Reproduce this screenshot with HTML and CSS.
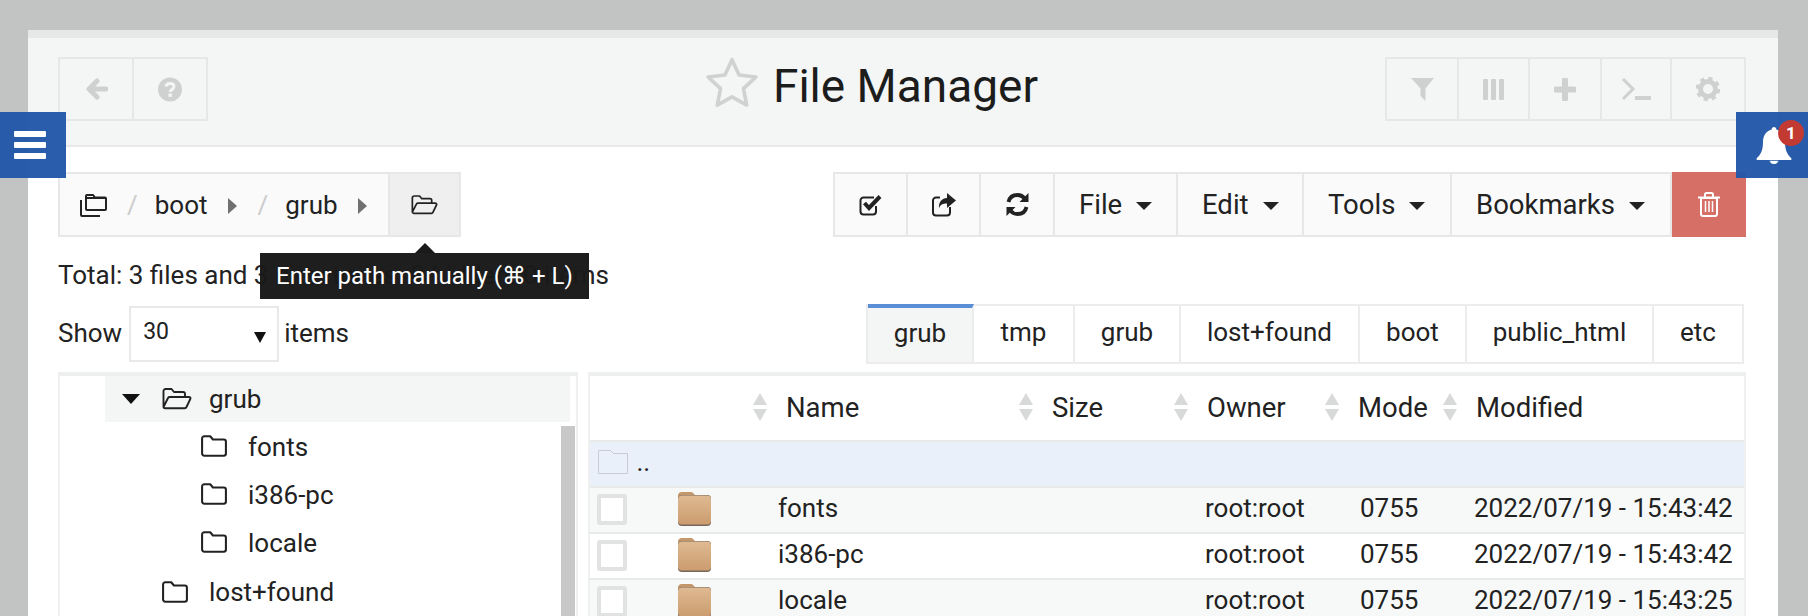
FILE: index.html
```html
<!DOCTYPE html>
<html lang="en">
<head>
    <meta charset="UTF-8">
    <meta name="viewport" content="width=device-width, initial-scale=1.0">
    <title>File Manager</title>
    <link rel="stylesheet" href="styles.css">
</head>
<body>
    <svg class="defs" width="0" height="0">
        <linearGradient id="tan" x1="0" y1="0" x2="0" y2="1">
            <stop offset="0" stop-color="#dfba92"/>
            <stop offset="1" stop-color="#cb9c6f"/>
        </linearGradient>
        <symbol id="folder-line" viewBox="0 0 24 20">
            <path d="M3 1h5.500l2.500 3h10a2 2 0 0 1 2 2v11a2 2 0 0 1-2 2H3a2 2 0 0 1-2-2V3a2 2 0 0 1 2-2z" fill="none" stroke="currentColor" stroke-width="1.900" stroke-linejoin="round"/>
        </symbol>
        <symbol id="folder-open" viewBox="0 0 30 22">
            <path d="M1.500 19V3a2 2 0 0 1 2-2h6l2.500 3h9a2 2 0 0 1 2 2v3M1.500 19l4.500-9a2 2 0 0 1 1.800-1h19c1.500 0 2 1 1.500 2l-3.800 8a2 2 0 0 1-1.800 1.200H3a1.500 1.500 0 0 1-1.500-1.200z" fill="none" stroke="currentColor" stroke-width="1.900" stroke-linejoin="round"/>
        </symbol>
        <symbol id="folder-tan" viewBox="0 0 35 36">
            <path d="M1 5q0-4 4-4h9q2 0 3 2l1 1h12a4 4 0 0 1 4 4v4H1z" fill="#c4976a"/>
            <rect y="4" x="1" width="33" height="31" rx="4" fill="#77685c"/>
            <rect y="4.500" x="1" width="33" height="29" rx="4" fill="url(#tan)"/>
        </symbol>
    </svg>

    <div class="side-tab side-tab-left">
        <span class="burger"><i></i><i></i><i></i></span>
    </div>
    <div class="side-tab side-tab-right">
        <svg class="bell" viewBox="0 0 36 38"><path d="M18 1c1.500 0 2.300 1 2.300 2.500C26 5 29 10 29 16c0 8 2 12 6 16 1 1 .5 2-1 2H2c-1.500 0-2-1-1-2 4-4 6-8 6-16 0-6 3-11 8.700-12.500C15.700 2 16.500 1 18 1z" fill="#fff"/><path d="M13.500 34.500a4.500 4 0 0 0 9 0z" fill="#fff" stroke="#2a5cab" stroke-width=".6"/></svg>
        <span class="badge">1</span>
    </div>

    <div class="panel">
        <header class="panel-head">
            <div class="btn-group ghost">
                <span class="btn btn-back"><svg width="23" height="24" viewBox="0 0 23 24"><path d="M12 4 4 12l8 8M5 12h16" fill="none" stroke="currentColor" stroke-width="5" stroke-linecap="round" stroke-linejoin="round"/></svg></span>
                <span class="btn btn-help"><svg width="24" height="25" viewBox="0 0 24 25"><circle cx="12" cy="12.500" r="12" fill="currentColor"/><path d="M8 9.500c.3-2 2-3 4-3 2.300 0 4 1.300 4 3.200 0 2.800-3.800 2.800-3.800 5.300" fill="none" stroke="#f4f6f5" stroke-width="2.800"/><rect x="10.500" y="16.500" width="3.400" height="3.300" fill="#f4f6f5"/></svg></span>
            </div>
            <h1 class="title">
                <svg class="star" width="54" height="52" viewBox="0 0 52 50"><path d="M26 3.500 32.800 18.200 49 20.200 37 31.300 40.200 47.200 26 39.300 11.800 47.200 15 31.300 3 20.200 19.200 18.200z" fill="none" stroke="#d0d1d1" stroke-width="3.500" stroke-linejoin="round"/></svg>
                <span class="title-text">File Manager</span>
            </h1>
            <div class="btn-group ghost group-right">
                <span class="btn w72"><svg width="23" height="23" viewBox="0 0 23 23"><path d="M0 0h23l-8.500 10.500V23l-5-5v-7.500z" fill="currentColor"/></svg></span>
                <span class="btn w71"><svg width="21" height="21" viewBox="0 0 21 21"><rect width="5" height="21" rx="1" fill="currentColor"/><rect x="8" width="5" height="21" rx="1" fill="currentColor"/><rect x="16" width="5" height="21" rx="1" fill="currentColor"/></svg></span>
                <span class="btn w72"><svg width="22" height="23" viewBox="0 0 22 23"><path d="M11 2v19M2 11.500h18" stroke="currentColor" stroke-width="6" stroke-linecap="round"/></svg></span>
                <span class="btn w70"><svg width="30" height="24" viewBox="0 0 30 24"><path d="M2 2l10 10-10 10" fill="none" stroke="currentColor" stroke-width="3"/><rect x="14" y="19" width="16" height="4" fill="currentColor"/></svg></span>
                <span class="btn w72"><svg width="24" height="26" viewBox="0 0 24 26"><circle cx="12" cy="13" r="7.500" fill="none" stroke="currentColor" stroke-width="5"/><circle cx="12" cy="13" r="10.500" fill="none" stroke="currentColor" stroke-width="3.500" stroke-dasharray="4.200 4.050"/></svg></span>
            </div>
        </header>

        <div class="panel-body">
            <div class="toolbar">
                <div class="crumbs">
                    <div class="crumb-path">
                        <svg class="files-icon" width="27" height="24" viewBox="0 0 27 24"><path d="M6 16V3a1 1 0 0 1 1-1h6l2 2.500h10a1 1 0 0 1 1 1V16a1 1 0 0 1-1 1H7a1 1 0 0 1-1-1z" fill="none" stroke="#222" stroke-width="2"/><path d="M1 7v15a1 1 0 0 0 1 1h18" fill="none" stroke="#222" stroke-width="2"/><path d="M6 5h20" stroke="#222" stroke-width="2"/></svg>
                        <span class="slash">/</span>
                        <span>boot</span><span class="caret-right"></span>
                        <span class="slash">/</span>
                        <span>grub</span><span class="caret-right"></span>
                    </div>
                    <div class="crumb-btn">
                        <svg width="27" height="20" viewBox="0 0 30 22" class="ic-dark"><use href="#folder-open"/></svg>
                        <div class="tooltip">Enter path manually (⌘ + L)</div>
                    </div>
                </div>
                <div class="btn-group tools">
                    <span class="btn w73"><svg width="24" height="22" viewBox="0 0 24 22"><path d="M17 12v5.500a3 3 0 0 1-3 3H4.500a3 3 0 0 1-3-3v-11a3 3 0 0 1 3-3H15" fill="none" stroke="#222" stroke-width="2"/><path d="M5.500 9 10 14 21 2.500" fill="none" stroke="#222" stroke-width="4"/></svg></span>
                    <span class="btn w73"><svg width="24" height="24" viewBox="0 0 24 24"><path d="M18 14v5.500a3 3 0 0 1-3 3H4a3 3 0 0 1-3-3v-12a3 3 0 0 1 3-3h4" fill="none" stroke="#222" stroke-width="2"/><path d="M15 0l9 7.500-9 7.500v-4.500c-4 0-7 1-8 5 -.5-6 2-10 8-10.500z" fill="#222"/></svg></span>
                    <span class="btn w74"><svg width="23" height="25" viewBox="0 0 23 25"><path d="M2.500 10C3.500 5.500 7 3 11.500 3c3 0 5.500 1.300 7 3.500" fill="none" stroke="#222" stroke-width="3.800"/><path d="M22.500 1v9h-9z" fill="#222"/><path d="M20.500 15c-1 4.500-4.500 7-9 7-3 0-5.500-1.300-7-3.500" fill="none" stroke="#222" stroke-width="3.800"/><path d="M.5 24v-9h9z" fill="#222"/></svg></span>
                    <span class="btn btn-menu m-file">File<i class="caret-down"></i></span>
                    <span class="btn btn-menu m-edit">Edit<i class="caret-down"></i></span>
                    <span class="btn btn-menu m-tools">Tools<i class="caret-down"></i></span>
                    <span class="btn btn-menu m-marks">Bookmarks<i class="caret-down"></i></span>
                    <span class="btn btn-trash"><svg width="22" height="25" viewBox="0 0 22 25"><path d="M3 6h16v16a2 2 0 0 1-2 2H5a2 2 0 0 1-2-2zM0 5.500h22M7 5V2.500A1.500 1.500 0 0 1 8.500 1h5A1.500 1.500 0 0 1 15 2.500V5" fill="none" stroke="#fff" stroke-width="2"/><path d="M7.500 9v11M11 9v11M14.500 9v11" stroke="#fff" stroke-width="1.500"/></svg></span>
                </div>
            </div>

            <p class="total">Total: 3 files and 3 directories. 0 hidden. 0 items</p>

            <div class="list-bar">
                <div class="page-size">
                    Show
                    <span class="select-box">30</span>
                    items
                </div>
                <div class="tabs">
                    <span class="tab active">grub</span>
                    <span class="tab">tmp</span>
                    <span class="tab">grub</span>
                    <span class="tab">lost+found</span>
                    <span class="tab">boot</span>
                    <span class="tab">public_html</span>
                    <span class="tab">etc</span>
                </div>
            </div>

            <div class="browser">
                <aside class="tree">
                    <div class="tree-row active lvl1">
                        <i class="caret-tree"></i>
                        <svg class="ic-dark" width="30" height="22"><use href="#folder-open"/></svg>
                        grub
                    </div>
                    <div class="tree-row lvl2">
                        <svg class="ic-dark" width="26" height="22"><use href="#folder-line"/></svg>
                        <span class="tree-label">fonts</span>
                    </div>
                    <div class="tree-row lvl2">
                        <svg class="ic-dark" width="26" height="22"><use href="#folder-line"/></svg>
                        <span class="tree-label">i386-pc</span>
                    </div>
                    <div class="tree-row lvl2">
                        <svg class="ic-dark" width="26" height="22"><use href="#folder-line"/></svg>
                        <span class="tree-label">locale</span>
                    </div>
                    <div class="tree-row lvl1b">
                        <svg class="ic-dark" width="26" height="22"><use href="#folder-line"/></svg>
                        lost+found
                    </div>
                    <div class="scroll-thumb"></div>
                </aside>

                <section class="files">
                    <table>
                        <colgroup>
                            <col class="c-check"><col class="c-icon"><col class="c-name"><col class="c-size"><col class="c-owner"><col class="c-mode"><col class="c-date">
                        </colgroup>
                        <thead>
                            <tr>
                                <th></th>
                                <th></th>
                                <th class="th-name"><span class="sort">Name</span></th>
                                <th><span class="sort">Size</span></th>
                                <th><span class="sort">Owner</span></th>
                                <th class="th-mode"><span class="sort">Mode</span></th>
                                <th><span class="sort">Modified</span></th>
                            </tr>
                        </thead>
                        <tbody>
                            <tr class="row-up">
                                <td colspan="7">
                                    <svg width="30" height="24" viewBox="0 0 30 24"><path d="M.5 23.500V.5h12l3 3h14v20z" fill="#eaf0fa" stroke="#c6cbd4"/></svg>
                                    <span>..</span>
                                </td>
                            </tr>
                            <tr class="odd">
                                <td><span class="check"></span></td>
                                <td><svg class="tan" width="35" height="36"><use href="#folder-tan"/></svg></td>
                                <td>fonts</td><td></td><td>root:root</td><td>0755</td><td>2022/07/19 - 15:43:42</td>
                            </tr>
                            <tr>
                                <td><span class="check"></span></td>
                                <td><svg class="tan" width="35" height="36"><use href="#folder-tan"/></svg></td>
                                <td>i386-pc</td><td></td><td>root:root</td><td>0755</td><td>2022/07/19 - 15:43:42</td>
                            </tr>
                            <tr class="odd">
                                <td><span class="check"></span></td>
                                <td><svg class="tan" width="35" height="36"><use href="#folder-tan"/></svg></td>
                                <td>locale</td><td></td><td>root:root</td><td>0755</td><td>2022/07/19 - 15:43:25</td>
                            </tr>
                        </tbody>
                    </table>
                </section>
            </div>
        </div>
    </div>
</body>
</html>
```
FILE: styles.css
```css
* {
    box-sizing: border-box;
}

html, body {
    height: 616px;
    overflow: hidden;
}

body {
    margin: 0;
    padding-top: 30px;
    background: #c2c4c3;
    font-family: 'Roboto', 'DejaVu Sans', sans-serif;
    font-size: 26px;
    color: #222;
}

.defs {
    position: absolute;
}

.panel {
    margin: 0 30px 0 28px;
    height: 586px;
    background: #fff;
    border-top: 8px solid #e6e7e7;
    overflow: hidden;
}

.panel-head {
    display: flex;
    align-items: flex-start;
    height: 109px;
    padding: 19px 32px 0 30px;
    background: #f4f6f5;
    border-bottom: 2px solid #e8e9e9;
}

.title {
    display: flex;
    align-items: center;
    gap: 14px;
    margin: -1px 0 0 497px;
    height: 52px;
    font-size: 46px;
    font-weight: 400;
    color: #1c1c1c;
}

.title-text {
    margin-top: 8px;
}

.group-right {
    margin-left: auto;
}

.btn-group {
    display: flex;
    border: 2px solid #e6e7e7;
}

.btn {
    display: flex;
    align-items: center;
    justify-content: center;
    border-right: 2px solid #e6e7e7;
}

.btn:last-child {
    border-right: 0;
}

.ghost {
    height: 64px;
    color: #cfd0d0;
}

.btn-back {
    width: 74px;
}

.btn-help {
    width: 72px;
}

.w70 { width: 70px; }
.w71 { width: 71px; }
.w72 { width: 72px; }
.w73 { width: 73px; }
.w74 { width: 74px; }

.panel-body {
    padding: 25px 32px 0 30px;
}

.toolbar {
    display: flex;
    justify-content: space-between;
}

.crumbs {
    display: flex;
    height: 65px;
    border: 2px solid #e6e7e7;
}

.crumb-path {
    display: flex;
    align-items: center;
    width: 328px;
    padding-left: 20px;
    background: #fafafa;
}

.files-icon {
    margin-right: 20px;
}

.slash {
    margin: 0 17px 0 0;
    color: #ccc;
}

.caret-right {
    width: 0;
    height: 0;
    margin: 2px 21px 0 20px;
    border-left: 9px solid #707070;
    border-top: 8px solid transparent;
    border-bottom: 8px solid transparent;
}

.crumb-btn {
    position: relative;
    display: flex;
    align-items: center;
    justify-content: center;
    width: 71px;
    background: #efefef;
    border-left: 2px solid #e6e7e7;
}

.ic-dark {
    color: #222;
    flex: none;
}

.tooltip {
    position: absolute;
    top: 79px;
    left: -130px;
    padding: 0 16px;
    height: 46px;
    line-height: 46px;
    width: 329px;
    font-size: 24px;
    white-space: nowrap;
    color: #fff;
    background: rgba(26, 26, 26, 0.98);
    z-index: 5;
}

.tooltip::before {
    content: "";
    position: absolute;
    top: -10px;
    left: 155px;
    border-left: 10px solid transparent;
    border-right: 10px solid transparent;
    border-bottom: 10px solid #1a1a1a;
}

.tools {
    height: 65px;
    background: #fafafa;
}

.btn-menu {
    justify-content: flex-start;
    padding-left: 24px;
    font-size: 27.500px;
}

.m-file { width: 123px; }
.m-edit { width: 126px; }
.m-tools { width: 148px; }
.m-marks { width: 220px; }

.caret-down {
    margin: 3px 0 0 14px;
    border-left: 8px solid transparent;
    border-right: 8px solid transparent;
    border-top: 8px solid #222;
}

.btn-trash {
    width: 74px;
    margin: -2px -2px -2px 0;
    background: #d66f66;
}

.total {
    margin: 21px 0 0;
    height: 34px;
    line-height: 34px;
    white-space: nowrap;
}

.list-bar {
    display: flex;
    justify-content: space-between;
    align-items: flex-start;
    height: 68px;
    margin-top: 12px;
    padding-right: 2px;
}

.page-size {
    display: flex;
    align-items: center;
    gap: 7px;
    height: 58px;
}

.select-box {
    position: relative;
    display: flex;
    align-items: center;
    width: 150px;
    height: 56px;
    margin: 2px -2px 0 0;
    padding: 0 0 6px 12px;
    border: 2px solid #e8e9e9;
    font-size: 23px;
}

.select-box::after {
    content: "";
    position: absolute;
    right: 11px;
    top: 24px;
    border-left: 6px solid transparent;
    border-right: 6px solid transparent;
    border-top: 11px solid #111;
}

.tabs {
    display: flex;
    height: 60px;
    border: 2px solid #ececec;
}

.tab {
    display: flex;
    align-items: center;
    justify-content: center;
    padding-bottom: 4px;
    border-right: 2px solid #ececec;
}

.tab:nth-child(1) { width: 106px; }
.tab:nth-child(2) { width: 101px; }
.tab:nth-child(3) { width: 106px; }
.tab:nth-child(4) { width: 179px; }
.tab:nth-child(5) { width: 107px; }
.tab:nth-child(6) { width: 187px; }
.tab:nth-child(7) { width: 88px; border-right: 0; }

.tab.active {
    margin-top: -2px;
    border-top: 4px solid #5a8fd8;
    background: #f4f6f5;
}

.browser {
    display: flex;
    align-items: flex-start;
    gap: 10px;
}

.tree {
    position: relative;
    flex: none;
    width: 520px;
    height: 244px;
    border: 2px solid #eeefef;
    border-top-width: 4px;
    border-bottom: 0;
}

.tree-row {
    display: flex;
    align-items: center;
    height: 48px;
}

.tree-row.active {
    height: 46px;
    margin: 0 6px 0 45px;
    background: #f4f6f5;
}

.lvl1 {
    padding-left: 17px;
}

.lvl1 svg {
    margin-right: 17px;
}

.lvl2 {
    padding-left: 141px;
}

.lvl2 svg, .lvl1b svg {
    margin-right: 21px;
}

.tree-label {
    margin-top: 2px;
}

.lvl1b {
    padding: 4px 0 0 102px;
}

.caret-tree {
    margin-right: 22px;
    border-left: 9px solid transparent;
    border-right: 9px solid transparent;
    border-top: 10px solid #111;
}

.scroll-thumb {
    position: absolute;
    top: 50px;
    right: 1px;
    bottom: 0;
    width: 14px;
    background: #c8c8c8;
}

.files {
    flex: 1;
    height: 244px;
    overflow: hidden;
    border: 2px solid #eeefef;
    border-top-width: 4px;
    border-bottom: 0;
}

table {
    width: 100%;
    table-layout: fixed;
    border-collapse: collapse;
}

.c-check { width: 75px; }
.c-icon { width: 106px; }
.c-name { width: 272px; }
.c-size { width: 155px; }
.c-owner { width: 155px; }
.c-mode { width: 114px; }

th {
    height: 65px;
    padding: 0 0 2px 9px;
    font-size: 27.500px;
    font-weight: 400;
    text-align: left;
    border-bottom: 2px solid #e8e9e9;
}

.th-name {
    padding-left: 15px;
}

.th-mode {
    padding-left: 5px;
}

.sort {
    position: relative;
}

.sort::before {
    content: "";
    position: absolute;
    left: -33px;
    top: 2px;
    border-left: 7px solid transparent;
    border-right: 7px solid transparent;
    border-bottom: 12px solid #d8d9d9;
}

.sort::after {
    content: "";
    position: absolute;
    left: -33px;
    top: 18px;
    border-left: 7px solid transparent;
    border-right: 7px solid transparent;
    border-top: 12px solid #d8d9d9;
}

td {
    height: 46px;
    padding: 0 0 4px 7px;
    border-bottom: 2px solid #e8e9e9;
    white-space: nowrap;
}

.row-up td {
    padding-left: 8px;
    background: #e9f0fa;
}

.row-up svg {
    vertical-align: -3px;
}

.row-up span {
    margin-left: 2px;
}

.odd td {
    background: #f7f9f8;
}

.check {
    display: block;
    width: 30px;
    height: 31px;
    margin-top: 3px;
    background: #fff;
    border: 4px solid #e1e2e2;
    border-radius: 3px;
}

.tan {
    display: block;
    margin: 2px 0 0 5px;
}

.side-tab {
    position: absolute;
    top: 112px;
    height: 66px;
    background: rgba(36, 88, 170, 0.97);
    z-index: 10;
}

.side-tab-left {
    left: 0;
    width: 66px;
    padding: 19px 0 0 14px;
}

.side-tab-right {
    right: 0;
    width: 72px;
}

.burger {
    display: flex;
    flex-direction: column;
    gap: 5px;
    width: 32px;
}

.burger i {
    height: 6px;
    background: #fff;
    border-radius: 1px;
}

.bell {
    position: absolute;
    left: 20px;
    top: 14px;
    width: 36px;
    height: 38px;
}

.badge {
    position: absolute;
    left: 42px;
    top: 8px;
    width: 26px;
    height: 26px;
    line-height: 26px;
    text-align: center;
    font-size: 17px;
    font-weight: 700;
    color: #fff;
    background: #c33a33;
    border-radius: 50%;
}
```
